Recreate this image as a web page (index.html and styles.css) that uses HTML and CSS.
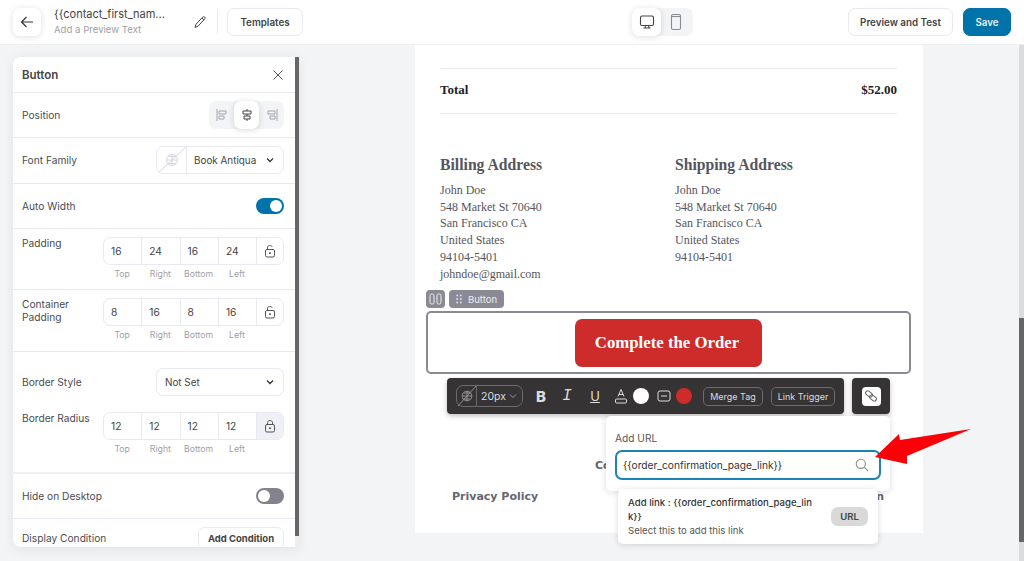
FILE: index.html
```html
<!DOCTYPE html>
<html lang="en">
<head>
    <meta charset="UTF-8">
    <meta name="viewport" content="width=device-width, initial-scale=1.0">
    <title>Email Builder</title>
    <link rel="stylesheet" href="styles.css">
</head>
<body>
    <header class="topbar">
        <button class="back-btn" aria-label="Back">
            <svg width="16" height="16" viewBox="0 0 16 16" fill="none" stroke="#333" stroke-width="1.2"><path d="M14 8H2.5M7.5 3 2.5 8l5 5"/></svg>
        </button>
        <div class="title-block">
            <div class="title">{{contact_first_nam...</div>
            <div class="subtitle">Add a Preview Text</div>
        </div>
        <svg class="pencil" width="14" height="14" viewBox="0 0 14 14" fill="none" stroke="#444" stroke-width="1"><path d="M3 9.3 9.6 2.2c.6-.7 1.5-.8 2.1-.2s.5 1.5-.1 2.1L5 11.2l-3 1.2zM8.8 3l2.2 2"/></svg>
        <span class="divider"></span>
        <button class="btn templates">Templates</button>
        <div class="devices">
            <span class="device active">
                <svg width="16" height="16" viewBox="0 0 16 16" fill="none" stroke="#444" stroke-width="1.1"><rect x="1.5" y="2" width="13" height="9.5" rx="1.5"/><path d="M6.5 11.5 6 14M9.5 11.5l.5 2.500M4.500 14h7"/></svg>
            </span>
            <span class="device">
                <svg width="16" height="18" viewBox="0 0 16 18" fill="none" stroke="#8b8b96" stroke-width="1.1"><rect x="3.500" y="1.500" width="9" height="15" rx="1.500"/><path d="M3.500 3.500h9"/></svg>
            </span>
        </div>
        <button class="btn preview">Preview and Test</button>
        <button class="btn save">Save</button>
    </header>

    <main class="workspace">
        <div class="sidebar">
            <aside class="panel">
                <div class="panel-content">
                    <div class="panel-head">
                        <strong>Button</strong>
                        <svg width="12" height="12" viewBox="0 0 12 12" stroke="#555" stroke-width="1"><path d="M1.500 1.500l9 9M10.500 1.500l-9 9"/></svg>
                    </div>

                    <div class="row row-position">
                        <span>Position</span>
                        <div class="align-group">
                            <span class="align">
                                <svg width="12" height="14" viewBox="0 0 12 14" fill="none" stroke="#a3a3ad"><path d="M1 1v12M3 3h7v3H3zM3 8h5v3H3z"/></svg>
                            </span>
                            <span class="align active">
                                <svg width="12" height="14" viewBox="0 0 12 14" fill="none" stroke="#444"><path d="M6 1v2M6 6v2M6 11v2M2 3h8v3H2zM3 8h6v3H3z"/></svg>
                            </span>
                            <span class="align">
                                <svg width="12" height="14" viewBox="0 0 12 14" fill="none" stroke="#a3a3ad"><path d="M11 1v12M2 3h7v3H2zM4 8h5v3H4z"/></svg>
                            </span>
                        </div>
                    </div>

                    <div class="row row-font">
                        <span>Font Family</span>
                        <div class="select-box font-select">
                            <span class="font-icon">
                                <svg width="30" height="28" viewBox="0 0 30 28" fill="none" stroke="#d5d6dd"><circle cx="15" cy="14" r="5.500"/><path d="M9.500 14h11M15 8.500v11M11 10.500h8M11 17.500h8M0 28 30 0"/></svg>
                            </span>
                            <span class="select-value">Book Antiqua</span>
                            <svg class="chevron" width="8" height="6" viewBox="0 0 8 6" fill="none" stroke="#333" stroke-width="1.300"><path d="M1 1.500l3 3 3-3"/></svg>
                        </div>
                    </div>

                    <div class="row row-toggle">
                        <span>Auto Width</span>
                        <span class="toggle on"></span>
                    </div>

                    <div class="row-box row-padding">
                        <span class="box-label">Padding</span>
                        <div>
                            <div class="box-inputs">
                                <span>16</span><span>24</span><span>16</span><span>24</span>
                                <span class="lock">
                                    <svg width="12" height="14" viewBox="0 0 12 14" fill="none" stroke="#555" stroke-width="1"><rect x="1.500" y="5.500" width="9" height="7.500" rx="1.500"/><path d="M3.500 5.500V3.200c0-2.200 4-2.200 4.800-.4"/><circle cx="6" cy="9.200" r=".6" fill="#555"/></svg>
                                </span>
                            </div>
                            <div class="box-captions"><span>Top</span><span>Right</span><span>Bottom</span><span>Left</span></div>
                        </div>
                    </div>

                    <div class="row-box row-container">
                        <span class="box-label">Container<br>Padding</span>
                        <div>
                            <div class="box-inputs">
                                <span>8</span><span>16</span><span>8</span><span>16</span>
                                <span class="lock">
                                    <svg width="12" height="14" viewBox="0 0 12 14" fill="none" stroke="#555" stroke-width="1"><rect x="1.500" y="5.500" width="9" height="7.500" rx="1.500"/><path d="M3.500 5.500V3.200c0-2.200 4-2.200 4.800-.4"/><circle cx="6" cy="9.200" r=".6" fill="#555"/></svg>
                                </span>
                            </div>
                            <div class="box-captions"><span>Top</span><span>Right</span><span>Bottom</span><span>Left</span></div>
                        </div>
                    </div>

                    <div class="group-border">
                        <div class="row-plain">
                            <span>Border Style</span>
                            <div class="select-box border-select">
                                <span class="select-value">Not Set</span>
                                <svg class="chevron" width="8" height="6" viewBox="0 0 8 6" fill="none" stroke="#333" stroke-width="1.300"><path d="M1 1.500l3 3 3-3"/></svg>
                            </div>
                        </div>
                        <div class="row-radius">
                            <span class="box-label">Border Radius</span>
                            <div>
                                <div class="box-inputs">
                                    <span>12</span><span>12</span><span>12</span><span>12</span>
                                    <span class="lock locked">
                                        <svg width="12" height="14" viewBox="0 0 12 14" fill="none" stroke="#555" stroke-width="1"><rect x="1.500" y="5.500" width="9" height="7.500" rx="1.500"/><path d="M3.500 5.500V3.500c0-2.600 5-2.600 5 0v2"/><circle cx="6" cy="9.200" r=".6" fill="#555"/></svg>
                                    </span>
                                </div>
                                <div class="box-captions"><span>Top</span><span>Right</span><span>Bottom</span><span>Left</span></div>
                            </div>
                        </div>
                    </div>

                    <div class="row row-toggle">
                        <span>Hide on Desktop</span>
                        <span class="toggle"></span>
                    </div>

                    <div class="row-condition">
                        <span>Display Condition</span>
                        <button class="btn add-condition">Add Condition</button>
                    </div>
                </div>
                <div class="panel-scroll"><span></span></div>
            </aside>
        </div>

        <section class="canvas">
            <div class="total-row">
                <strong>Total</strong>
                <strong>$52.00</strong>
            </div>

            <div class="addresses">
                <div>
                    <h3>Billing Address</h3>
                    <p>John Doe<br>548 Market St 70640<br>San Francisco CA<br>United States<br>94104-5401<br>johndoe@gmail.com</p>
                </div>
                <div>
                    <h3>Shipping Address</h3>
                    <p>John Doe<br>548 Market St 70640<br>San Francisco CA<br>United States<br>94104-5401</p>
                </div>
            </div>

            <div class="button-block">
                <a class="order-btn">Complete the Order</a>
            </div>

            <p class="contact-line">Co</p>
            <div class="footer-links">
                <span>Privacy Policy</span>
                <span>n</span>
            </div>

            <!-- floating editor bits sit over the email content -->
            <div class="block-tags">
                <span class="tag tag-columns">
                    <svg width="13" height="12" viewBox="0 0 13 12" fill="none" stroke="#eee"><rect x="1" y="1" width="4" height="10" rx="1.500"/><rect x="8" y="1" width="4" height="10" rx="1.500"/></svg>
                </span>
                <span class="tag tag-name">
                    <svg width="6" height="10" viewBox="0 0 6 10" fill="#e6e6ea"><circle cx="1.200" cy="1.500" r=".9"/><circle cx="4.800" cy="1.500" r=".9"/><circle cx="1.200" cy="5" r=".9"/><circle cx="4.800" cy="5" r=".9"/><circle cx="1.200" cy="8.500" r=".9"/><circle cx="4.800" cy="8.500" r=".9"/></svg>
                    Button
                </span>
            </div>

            <div class="toolbar">
                <div class="tb-font">
                    <span class="tb-globe">
                        <svg width="20" height="22" viewBox="0 0 20 22" fill="none" stroke="#9a9a9a" stroke-width=".9"><circle cx="10" cy="11" r="4.800"/><path d="M5.200 11h9.600M10 6.200v9.600M6.500 8h7M6.500 14h7M0 22 20 0"/></svg>
                    </span>
                    <span class="tb-size">20px</span>
                    <svg width="8" height="6" viewBox="0 0 8 6" fill="none" stroke="#9a9a9a"><path d="M1 1.500l3 3 3-3"/></svg>
                </div>
                <span class="tb-b">B</span>
                <span class="tb-i">I</span>
                <span class="tb-u">U</span>
                <svg class="tb-fill" width="14" height="16" viewBox="0 0 14 16" fill="none" stroke="#ddd"><path d="M4 8.500 7 1.500l3 7M5 6.500h4"/><rect x="1.500" y="11" width="11" height="4" rx="1"/></svg>
                <span class="dot white"></span>
                <svg class="tb-border" width="14" height="12" viewBox="0 0 14 12" fill="none" stroke="#ddd"><rect x="1" y="1" width="12" height="10" rx="2"/><path d="M4 6h6"/></svg>
                <span class="dot red"></span>
                <span class="tb-btn merge">Merge Tag</span>
                <span class="tb-btn trigger">Link Trigger</span>
            </div>

            <div class="link-tool">
                <span>
                    <svg width="16" height="16" viewBox="0 0 16 16" fill="none" stroke="#666" stroke-width="1"><rect x="-3.800" y="-2.100" width="7.600" height="4.200" rx="2.100" transform="translate(6 6) rotate(40)"/><rect x="-3.800" y="-2.100" width="7.600" height="4.200" rx="2.100" transform="translate(10 10) rotate(40)"/></svg>
                </span>
            </div>

            <div class="url-popover">
                <label>Add URL</label>
                <div class="url-input">
                    <span>{{order_confirmation_page_link}}</span>
                    <svg width="14" height="14" viewBox="0 0 14 14" fill="none" stroke="#8d8d8d" stroke-width="1.100"><circle cx="5.800" cy="5.800" r="4.600"/><path d="m9.200 9.200 4 4"/></svg>
                </div>
            </div>

            <div class="url-suggest">
                <div class="suggest-text">
                    <strong>Add link : {{order_confirmation_page_lin<br>k}}</strong>
                    <span>Select this to add this link</span>
                </div>
                <span class="url-chip">URL</span>
            </div>
        </section>

        <div class="page-scroll"><span></span></div>
    </main>

    <svg class="callout-arrow" width="100" height="38" viewBox="0 0 100 38"><polygon points="0,28 24,5 25,11 96,0 32,27 32,35" fill="#fb0007"/></svg>
</body>
</html>
```

FILE: styles.css
```css
:root {
    --line: #e8e9f2;
    --text: #4a4a52;
    --muted: #a0a0a8;
    --blue: #0073aa;
    --page-bg: #f3f4f5;
}

* {
    box-sizing: border-box;
}

html, body {
    height: 561px;
    overflow: hidden;
}

body {
    margin: 0;
    position: relative;
    font-family: Inter, "Liberation Sans", sans-serif;
    font-size: 10.2px;
    color: var(--text);
    background-color: var(--page-bg);
}

button {
    font: inherit;
    cursor: pointer;
}

/* top bar */
.topbar {
    height: 45px;
    display: flex;
    align-items: center;
    padding: 0 13px;
    background-color: #fff;
    border-bottom: 1px solid #eeeff1;
}

.back-btn {
    width: 28px;
    height: 28px;
    padding: 0;
    display: flex;
    align-items: center;
    justify-content: center;
    background-color: #fff;
    border: none;
    border-radius: 7px;
    box-shadow: 0 1px 6px rgba(30, 30, 60, 0.14);
}

.title-block {
    width: 132px;
    margin-left: 13px;
}

.title {
    font-size: 11px;
    line-height: 15px;
    color: #444;
}

.subtitle {
    margin-top: 1px;
    font-size: 9.600px;
    line-height: 14px;
    color: var(--muted);
}

.pencil {
    margin-left: 7px;
}

.divider {
    width: 1px;
    height: 24px;
    margin-left: 10px;
    background-color: var(--line);
}

.btn {
    height: 28px;
    padding: 0;
    color: #444;
    font-weight: 600;
    font-size: 9.800px;
    background-color: #fff;
    border: 1px solid var(--line);
    border-radius: 7px;
}

.templates {
    width: 76px;
    margin-left: 9px;
}

.devices {
    display: flex;
    width: 61px;
    height: 28px;
    margin-left: 329px;
    background-color: var(--page-bg);
    border-radius: 7px;
}

.device {
    width: 29px;
    display: flex;
    align-items: center;
    justify-content: center;
}

.device.active {
    background-color: #fff;
    border-radius: 7px;
    box-shadow: 0 1px 6px rgba(30, 30, 60, 0.14);
}

.preview {
    width: 105px;
    margin-left: auto;
}

.save {
    width: 48px;
    margin-left: 10px;
    color: #e8f2f7;
    background-color: var(--blue);
    border-color: var(--blue);
}

/* main area */
.workspace {
    display: flex;
    height: 516px;
}

.sidebar {
    flex: 0 0 415px;
    padding: 12px 0 0 13px;
}

.panel {
    display: flex;
    width: 286px;
    height: 490px;
    background-color: #fff;
    border-radius: 8px 0 0 8px;
    box-shadow: 0 2px 12px rgba(30, 30, 60, 0.08);
    overflow: hidden;
}

.panel-content {
    width: 282px;
    flex: none;
}

.panel-scroll {
    width: 4px;
    background-color: #eeeeee;
}

.panel-scroll span {
    display: block;
    height: 479px;
    background-color: #666;
}

.panel-head {
    height: 36px;
    display: flex;
    align-items: center;
    justify-content: space-between;
    padding: 0 11px 0 9px;
    font-size: 11.500px;
    border-bottom: 1px solid var(--line);
}

.panel-head strong {
    font-weight: 600;
    color: #444;
}

.row {
    height: 45px;
    display: flex;
    align-items: center;
    justify-content: space-between;
    padding: 0 11px 0 9px;
    border-bottom: 1px solid var(--line);
}

.row-font {
    height: 46px;
    padding-bottom: 1px;
}

.align-group {
    display: flex;
    height: 28px;
    background-color: var(--page-bg);
    border-radius: 7px;
}

.align {
    width: 25px;
    display: flex;
    align-items: center;
    justify-content: center;
}

.align.active {
    background-color: #fff;
    border-radius: 7px;
    box-shadow: 0 1px 6px rgba(30, 30, 60, 0.16);
}

.select-box {
    height: 28px;
    display: flex;
    align-items: center;
    background-color: #fff;
    border: 1px solid var(--line);
    border-radius: 7px;
    overflow: hidden;
}

.font-select {
    width: 128px;
}

.font-icon {
    width: 30px;
    height: 28px;
    flex: none;
    border-right: 1px solid var(--line);
}

.font-icon svg {
    display: block;
}

.font-select .select-value {
    margin-left: 7px;
}

.select-value {
    flex: 1;
    font-size: 9.900px;
    color: #444;
}

.chevron {
    margin-right: 9px;
}

.toggle {
    position: relative;
    width: 28px;
    height: 16px;
    background-color: #83838f;
    border-radius: 8px;
}

.toggle::after {
    content: "";
    position: absolute;
    top: 2px;
    left: 2px;
    width: 12px;
    height: 12px;
    background-color: #fff;
    border-radius: 50%;
}

.toggle.on {
    background-color: var(--blue);
}

.toggle.on::after {
    left: 14px;
}

.row-box {
    display: flex;
    justify-content: space-between;
    padding: 8px 11px 0 9px;
    border-bottom: 1px solid var(--line);
}

.row-padding {
    height: 61px;
}

.row-container {
    height: 62px;
}

.box-label {
    line-height: 13px;
}

.box-inputs {
    display: flex;
    width: 181px;
    height: 28px;
    background-color: #fff;
    border: 1px solid var(--line);
    border-radius: 7px;
    overflow: hidden;
}

.box-inputs span {
    width: 38.300px;
    flex: none;
    padding-left: 7px;
    line-height: 26px;
    font-size: 10.2px;
    color: #444;
    border-right: 1px solid var(--line);
}

.box-inputs .lock {
    flex: 1;
    display: flex;
    align-items: center;
    justify-content: center;
    padding: 0;
    border-right: none;
}

.box-inputs .locked {
    background-color: #eff0f5;
}

.box-captions {
    display: flex;
    width: 153px;
    margin-top: 3px;
}

.box-captions span {
    flex: 1;
    font-size: 8.700px;
    line-height: 12px;
    text-align: center;
    color: var(--muted);
}

.group-border {
    height: 122px;
    padding: 16px 11px 0 9px;
    border-bottom: 2px solid #eeeff5;
}

.row-plain {
    display: flex;
    align-items: center;
    justify-content: space-between;
}

.border-select {
    width: 128px;
    padding-left: 8px;
}

.row-radius {
    display: flex;
    justify-content: space-between;
    margin-top: 16px;
}

.row-condition {
    display: flex;
    justify-content: space-between;
    padding: 8px 11px 0 9px;
    line-height: 22px;
}

.add-condition {
    width: 86px;
    height: 24px;
    font-size: 9.500px;
    font-weight: 700;
}

/* email preview */
.canvas {
    position: relative;
    width: 508px;
    height: 488px;
    padding: 23px 26px 0 25px;
    font-family: "Liberation Serif", serif;
    background-color: #fff;
}

.total-row {
    height: 46px;
    display: flex;
    align-items: center;
    justify-content: space-between;
    padding-bottom: 2px;
    font-size: 13px;
    color: #222;
    border-top: 1px solid var(--line);
    border-bottom: 1px solid var(--line);
}

.addresses {
    display: grid;
    grid-template-columns: 235px 1fr;
    margin-top: 41px;
}

.addresses h3 {
    margin: 0 0 7px;
    font-size: 15.700px;
    line-height: 20px;
    color: #55555e;
}

.addresses p {
    margin: 0;
    font-size: 12px;
    line-height: 16.700px;
    color: #55555e;
}

.button-block {
    display: flex;
    justify-content: center;
    height: 63px;
    margin: 29px -14px 0;
    padding-top: 6px;
    background-color: #fff;
    border: 2px solid #8a8a95;
    border-radius: 5px;
}

.order-btn {
    width: 187px;
    height: 48px;
    padding-right: 3px;
    font-size: 16.800px;
    font-weight: bold;
    line-height: 47px;
    text-align: center;
    color: #fff;
    background-color: #ce2b2b;
    border-radius: 7px;
}

.contact-line {
    margin: 85px 0 0;
    padding-left: 155px;
    font-family: "DejaVu Sans", sans-serif;
    font-size: 11px;
    font-weight: bold;
    line-height: 14px;
    color: #666;
}

.footer-links {
    display: flex;
    justify-content: space-between;
    margin-top: 17px;
    padding: 0 13px 0 12px;
    font-family: "DejaVu Sans", sans-serif;
    font-size: 11px;
    font-weight: bold;
    line-height: 14px;
    color: #666670;
}

.block-tags {
    position: absolute;
    top: 245px;
    left: 11px;
    display: flex;
    gap: 4px;
    font-family: Inter, sans-serif;
}

.tag {
    height: 18px;
    display: flex;
    align-items: center;
    justify-content: center;
    gap: 6px;
    font-size: 9.500px;
    color: #eee;
    background-color: #8a8a97;
    border-radius: 4px;
}

.tag-columns {
    width: 19px;
}

.tag-name {
    width: 55px;
}

.toolbar {
    position: absolute;
    top: 333px;
    left: 32px;
    width: 397px;
    height: 36px;
    display: flex;
    align-items: center;
    padding-left: 9px;
    font-family: Inter, sans-serif;
    color: #ddd;
    background-color: #363334;
    border-radius: 4px;
    box-shadow: 0 2px 5px rgba(0, 0, 0, 0.25);
}

.tb-font {
    width: 67px;
    height: 22px;
    display: flex;
    align-items: center;
    border: 1px solid #6c6a6b;
    border-radius: 7px;
    flex: none;
}

.tb-globe {
    width: 20px;
    height: 20px;
    flex: none;
    border-right: 1px solid #6c6a6b;
    overflow: hidden;
}

.tb-globe svg {
    display: block;
    margin-top: -1px;
}

.tb-size {
    width: 32px;
    padding-left: 4px;
    font-size: 10.500px;
}

.tb-b {
    margin-left: 12px;
    width: 12px;
    font-size: 15px;
    font-weight: 800;
    text-align: center;
}

.tb-i {
    margin-left: 14px;
    width: 12px;
    font-family: "Liberation Mono", monospace;
    font-size: 16px;
    font-style: italic;
    text-align: center;
}

.tb-u {
    margin-left: 16px;
    width: 12px;
    font-size: 13px;
    text-align: center;
    text-decoration: underline;
}

.tb-fill {
    margin-left: 13px;
    flex: none;
}

.dot {
    width: 16px;
    height: 16px;
    flex: none;
    border-radius: 50%;
}

.dot.white {
    margin-left: 5px;
    background-color: #fff;
}

.dot.red {
    margin-left: 5px;
    background-color: #ce2b2b;
}

.tb-border {
    margin-left: 8px;
    flex: none;
}

.tb-btn {
    height: 19px;
    flex: none;
    font-size: 9px;
    line-height: 17px;
    text-align: center;
    border: 1px solid #6c6a6b;
    border-radius: 5px;
}

.merge {
    width: 60px;
    margin-left: 11px;
}

.trigger {
    width: 64px;
    margin-left: 8px;
}

.link-tool {
    position: absolute;
    top: 333px;
    left: 437px;
    width: 38px;
    height: 36px;
    display: flex;
    align-items: center;
    justify-content: center;
    background-color: #363334;
    border-radius: 4px;
    box-shadow: 0 2px 5px rgba(0, 0, 0, 0.25);
}

.link-tool span {
    width: 19px;
    height: 19px;
    display: flex;
    align-items: center;
    justify-content: center;
    background-color: #fff;
    border-radius: 4px;
}

.url-popover {
    position: absolute;
    top: 371px;
    left: 191px;
    width: 284px;
    height: 75px;
    padding: 16px 9px 0;
    font-family: Inter, sans-serif;
    background-color: #fff;
    border-radius: 5px;
    box-shadow: 0 1px 6px rgba(30, 30, 60, 0.16);
}

.url-popover label {
    display: block;
    font-size: 10.200px;
    line-height: 13px;
    color: #555;
}

.url-input {
    height: 30px;
    display: flex;
    align-items: center;
    justify-content: space-between;
    margin-top: 5px;
    padding: 0 10px 0 6px;
    font-size: 10.200px;
    color: #333;
    border: 2px solid #1a84b8;
    border-radius: 7px;
}

.url-suggest {
    position: absolute;
    top: 444px;
    left: 203px;
    width: 260px;
    height: 55px;
    display: flex;
    align-items: center;
    justify-content: space-between;
    padding: 0 10px;
    font-family: Inter, sans-serif;
    background-color: #fff;
    border-radius: 5px;
    box-shadow: 0 1px 6px rgba(30, 30, 60, 0.16);
}

.suggest-text {
    font-size: 9.600px;
    line-height: 14px;
    color: #555;
}

.suggest-text strong {
    display: block;
    font-weight: 500;
    color: #333;
}

.url-chip {
    width: 37px;
    height: 19px;
    font-size: 9.500px;
    font-weight: 600;
    line-height: 19px;
    text-align: center;
    color: #444;
    background-color: #d9d9d9;
    border-radius: 7px;
}

.page-scroll {
    width: 5px;
    margin-left: auto;
    background-color: #dcdcdc;
}

.page-scroll span {
    display: block;
    height: 224px;
    margin-top: 273px;
    background-color: #666;
}

.callout-arrow {
    position: absolute;
    top: 429px;
    left: 875px;
}
```
